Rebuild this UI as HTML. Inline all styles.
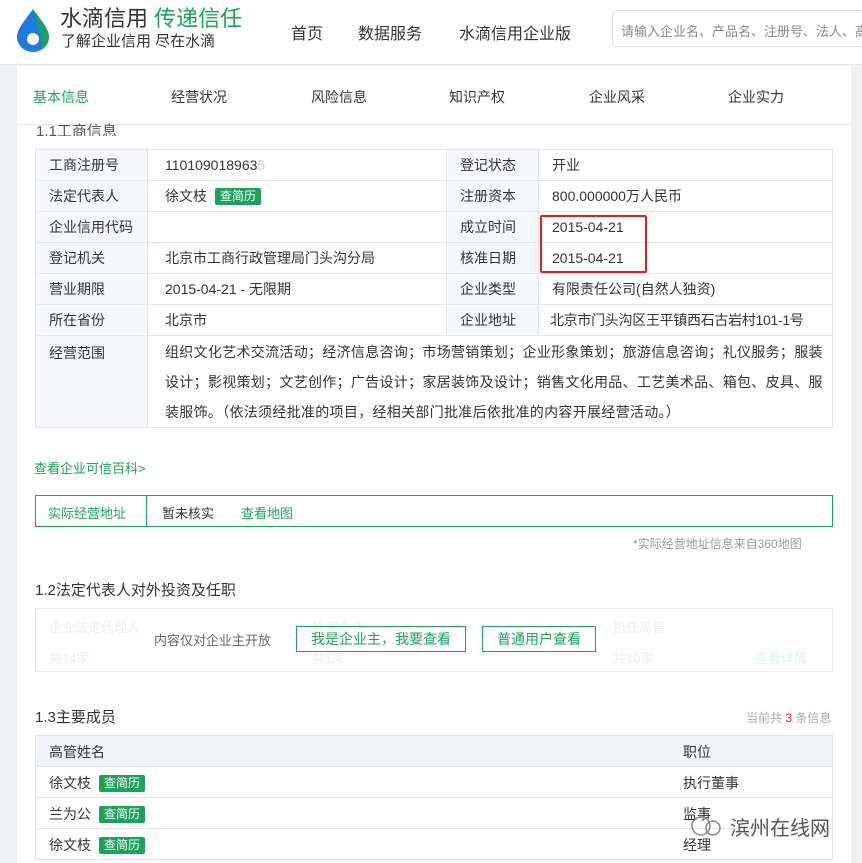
<!DOCTYPE html>
<html><head><meta charset="utf-8"><style>
*{margin:0;padding:0;box-sizing:border-box}
body{width:862px;height:863px;overflow:hidden;background:#eef0f2;font-family:"Liberation Sans","Noto Sans CJK SC",sans-serif;color:#333;position:relative;font-size:14px}
.a{position:absolute;white-space:nowrap}
.hdr{left:0;top:0;width:862px;height:65px;background:#fff;border-bottom:1px solid #e6e6e6}
.main{left:17px;top:66px;width:834px;height:797px;background:#fff}
table{border-collapse:collapse;position:absolute;table-layout:fixed}
td{border:1px solid #e2e5ea;height:31px;padding:0 13px;font-size:14px;vertical-align:middle;color:#333;white-space:nowrap;overflow:hidden}
td.l{background:#f5f7fa;color:#333}
.tag{display:inline-block;background:#1aa35a;color:#fff;font-size:12px;padding:0 5px;height:17px;line-height:17px;border-radius:2px;margin-left:8px;vertical-align:1px}
.g{color:#1aa35a}
.btn{border:1px solid #1aa35a;color:#1aa35a;font-size:14px;height:26px;line-height:24px;text-align:center}
.faint{color:#eceff0;font-size:13px}
</style></head><body>
<div class="a hdr"></div>
<svg class="a" style="left:15px;top:8px" width="36" height="44" viewBox="0 0 36 44"><path d="M18 1 C12 10 2 20 2 29 a16 15 0 0 0 32 0 C34 20 24 10 18 1Z" fill="#1e7ce0"/><path d="M18 1 C24 10 34 20 34 29 a16 15 0 0 1 -8 13 C28 30 24 18 18 1Z" fill="#1aa35a"/><ellipse cx="18" cy="31" rx="6" ry="6" fill="#fff"/></svg>
<div class="a" style="left:60px;top:6px;font-size:22px;color:#333;line-height:26px">水滴信用 <span class="g">传递信任</span></div>
<div class="a" style="left:61px;top:33px;font-size:15px;color:#333;line-height:18px">了解企业信用 尽在水滴</div>
<div class="a" style="left:291px;top:20px;font-size:16px">首页</div>
<div class="a" style="left:358px;top:20px;font-size:16px">数据服务</div>
<div class="a" style="left:459px;top:20px;font-size:16px">水滴信用企业版</div>
<div class="a" style="left:612px;top:10px;width:260px;height:37px;border:1px solid #ddd;border-radius:4px;background:#fff;padding:10px 8px;font-size:13px;color:#888;overflow:hidden">请输入企业名、产品名、注册号、法人、高</div>
<div class="a main"></div>
<div class="a" style="left:17px;top:124px;width:834px;height:1px;background:#e8e8e8"></div>
<div class="a g" style="left:33px;top:87px;font-size:14px">基本信息</div>
<div class="a" style="left:171px;top:87px">经营状况</div>
<div class="a" style="left:311px;top:87px">风险信息</div>
<div class="a" style="left:449px;top:87px">知识产权</div>
<div class="a" style="left:589px;top:87px">企业风采</div>
<div class="a" style="left:728px;top:87px">企业实力</div>
<div class="a" style="left:36px;top:120px;font-size:15px;color:#555;height:16px;overflow:hidden">1.1工商信息</div>
<table style="left:35px;top:149px;width:797px">
<colgroup><col style="width:112px"><col style="width:299px"><col style="width:92px"><col style="width:294px"></colgroup>
<tr><td class="l">工商注册号</td><td style="padding-left:17px">110109018963<span style="color:#ccc">5</span></td><td class="l">登记状态</td><td>开业</td></tr>
<tr><td class="l">法定代表人</td><td style="padding-left:17px">徐文枝<span class="tag">查简历</span></td><td class="l">注册资本</td><td>800.000000万人民币</td></tr>
<tr><td class="l">企业信用代码</td><td></td><td class="l">成立时间</td><td>2015-04-21</td></tr>
<tr><td class="l">登记机关</td><td style="padding-left:17px">北京市工商行政管理局门头沟分局</td><td class="l">核准日期</td><td>2015-04-21</td></tr>
<tr><td class="l">营业期限</td><td style="padding-left:17px">2015-04-21 - 无限期</td><td class="l">企业类型</td><td>有限责任公司(自然人独资)</td></tr>
<tr><td class="l">所在省份</td><td style="padding-left:17px">北京市</td><td class="l">企业地址</td><td style="padding-left:11px;letter-spacing:-0.3px">北京市门头沟区王平镇西石古岩村101-1号</td></tr>
<tr><td class="l" style="height:88px;vertical-align:top;padding-top:7px">经营范围</td><td colspan="3" style="vertical-align:top;padding:1px 8px 0 17px;line-height:30px;white-space:normal;letter-spacing:0.3px">组织文化艺术交流活动；经济信息咨询；市场营销策划；企业形象策划；旅游信息咨询；礼仪服务；服装设计；影视策划；文艺创作；广告设计；家居装饰及设计；销售文化用品、工艺美术品、箱包、皮具、服装服饰。（依法须经批准的项目，经相关部门批准后依批准的内容开展经营活动。）</td></tr>
</table>
<div class="a" style="left:540px;top:215px;width:107px;height:58px;border:2px solid #e02020;border-radius:2px"></div>
<div class="a g" style="left:34px;top:458px;font-size:13px">查看企业可信百科&gt;</div>
<div class="a" style="left:35px;top:495px;width:798px;height:32px;border:1px solid #1aa35a"></div>
<div class="a" style="left:146px;top:495px;width:1px;height:32px;background:#1aa35a"></div>
<div class="a g" style="left:48px;top:503px;font-size:13px">实际经营地址</div>
<div class="a" style="left:162px;top:503px;font-size:13px">暂未核实</div>
<div class="a g" style="left:241px;top:503px;font-size:13px">查看地图</div>
<div class="a" style="left:633px;top:535px;font-size:12px;color:#999">*实际经营地址信息来自360地图</div>
<div class="a" style="left:35px;top:579px;font-size:15px">1.2法定代表人对外投资及任职</div>
<div class="a" style="left:35px;top:608px;width:798px;height:64px;border:1px solid #e6e8ec"></div>
<div class="a faint" style="left:49px;top:617px">企业法定代理人</div>
<div class="a faint" style="left:49px;top:648px">共14家</div>
<div class="a faint" style="left:312px;top:617px">投资企业</div>
<div class="a faint" style="left:312px;top:648px">共1家</div>
<div class="a faint" style="left:613px;top:617px">担任高管</div>
<div class="a faint" style="left:613px;top:648px">共10家</div>
<div class="a faint" style="left:755px;top:648px;color:#e2f2e8">查看详情</div>
<div class="a" style="left:154px;top:630px;font-size:13px;color:#666">内容仅对企业主开放</div>
<div class="a btn" style="left:296px;top:626px;width:170px">我是企业主，我要查看</div>
<div class="a btn" style="left:482px;top:626px;width:114px">普通用户查看</div>
<div class="a" style="left:35px;top:706px;font-size:15px">1.3主要成员</div>
<div class="a" style="left:746px;top:709px;font-size:12px;color:#aaa">当前共 <span style="color:#e02020">3</span> 条信息</div>
<div class="a" style="left:35px;top:735px;width:798px;height:125px;border:1px solid #e2e5ea"></div>
<div class="a" style="left:36px;top:736px;width:796px;height:31px;background:#f2f4f7;border-bottom:1px solid #e2e5ea"></div>
<div class="a" style="left:36px;top:797px;width:796px;height:1px;background:#e2e5ea"></div>
<div class="a" style="left:36px;top:828px;width:796px;height:1px;background:#e2e5ea"></div>
<div class="a" style="left:49px;top:742px">高管姓名</div>
<div class="a" style="left:683px;top:742px">职位</div>
<div class="a" style="left:49px;top:773px">徐文枝<span class="tag">查简历</span></div>
<div class="a" style="left:683px;top:773px">执行董事</div>
<div class="a" style="left:49px;top:804px">兰为公<span class="tag">查简历</span></div>
<div class="a" style="left:683px;top:804px">监事</div>
<div class="a" style="left:49px;top:835px">徐文枝<span class="tag">查简历</span></div>
<div class="a" style="left:683px;top:835px">经理</div>
<div class="a" style="left:730px;top:812px;font-size:20px;color:#555">滨州在线网</div>
<svg class="a" style="left:686px;top:812px" width="40" height="28"><circle cx="15" cy="14" r="9" fill="none" stroke="#888" stroke-width="1.5"/><circle cx="27" cy="16" r="7" fill="none" stroke="#888" stroke-width="1.5"/></svg>
</body></html>
